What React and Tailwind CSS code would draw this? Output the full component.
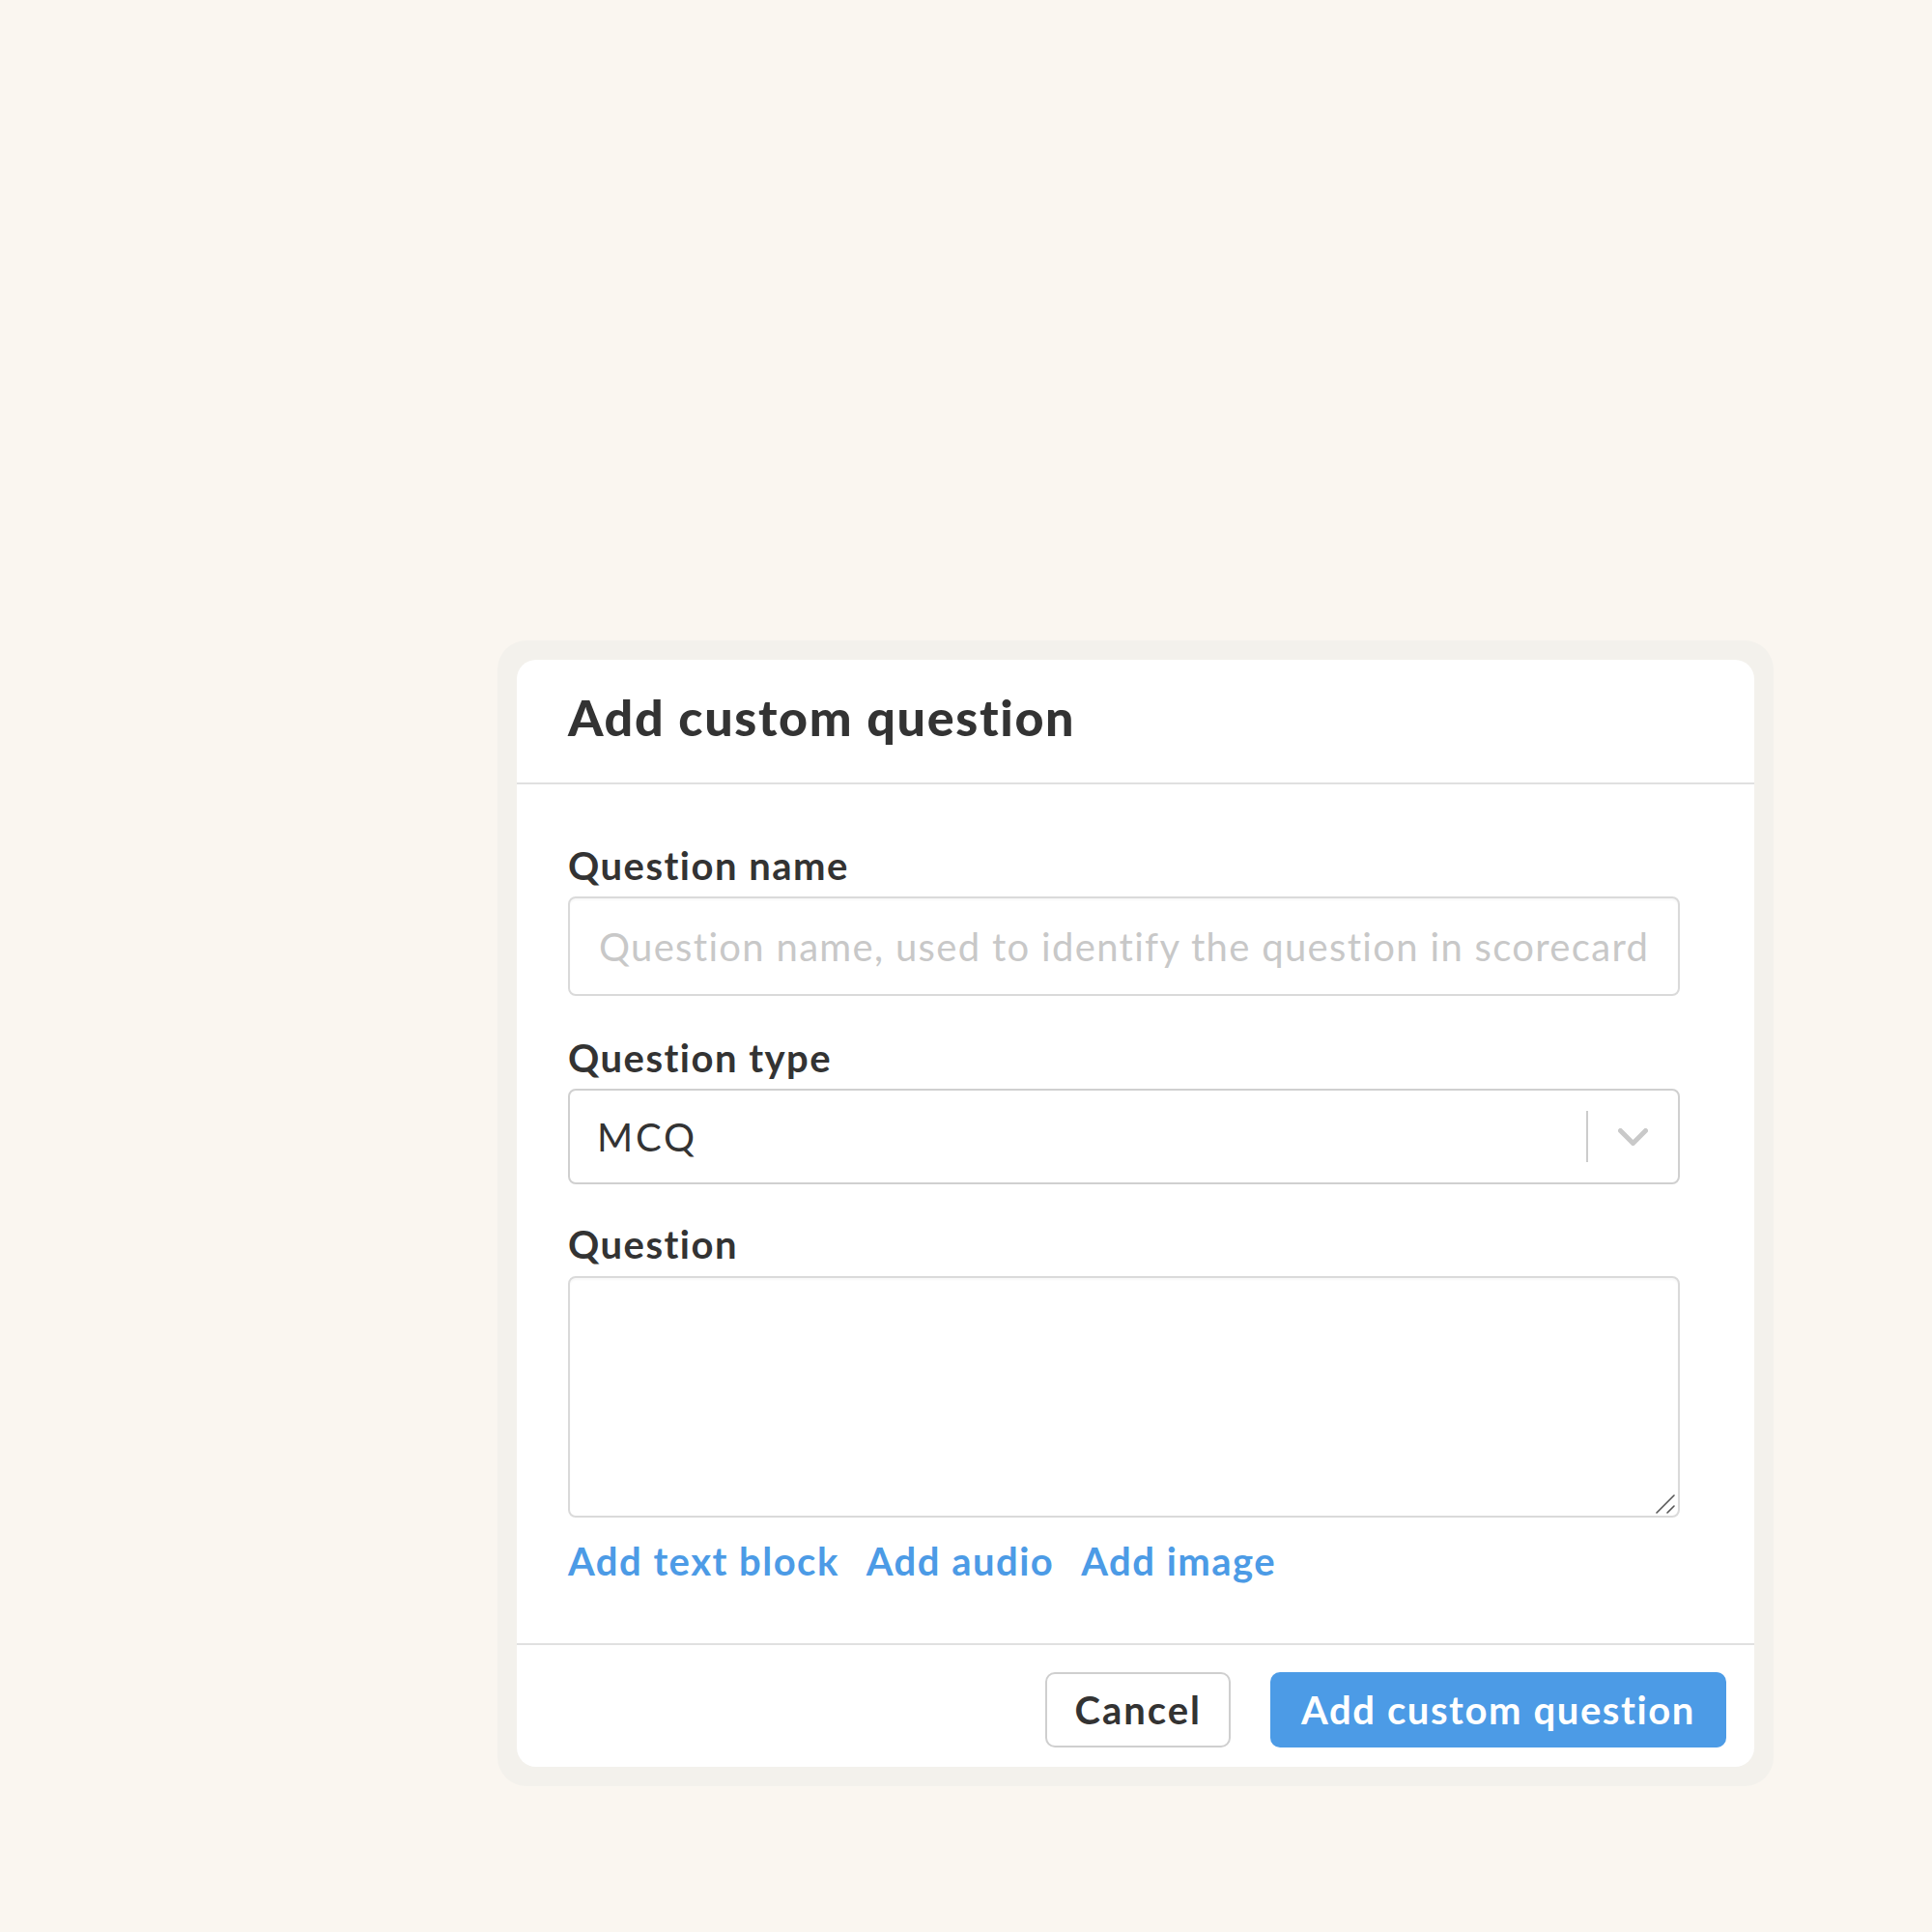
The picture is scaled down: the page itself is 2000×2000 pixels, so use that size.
import React from 'react'

// Light-grey chevron used by the question type picker
function Chevron() {
  return (
    <svg width="31" height="18" viewBox="0 0 31 18" fill="none">
      <polyline points="2.5,2.5 15.5,15.5 28.5,2.5" stroke="#c9c9c9" strokeWidth="5" strokeLinecap="round" strokeLinejoin="round" />
    </svg>
  )
}

function ResizeGrip() {
  return (
    <svg className="pointer-events-none absolute bottom-[4px] right-[5px]" width="20" height="20" viewBox="0 0 20 20" fill="none">
      <line x1="1" y1="19" x2="19" y2="1" stroke="#555555" strokeWidth="1.6" strokeLinecap="round" />
      <line x1="12" y1="19" x2="19" y2="12" stroke="#555555" strokeWidth="1.6" strokeLinecap="round" />
    </svg>
  )
}

function Label({ children, className = '' }) {
  return (
    <label className={`block text-[40px] leading-[40px] font-bold tracking-[0.037em] text-[#333333] ${className}`}>
      {children}
    </label>
  )
}

export default function App() {
  return (
    <div className="min-h-screen bg-[#faf6f0] pt-[663px] pl-[515px] font-['Lato',sans-serif]">
      <div className="w-[1321px] rounded-[30px] bg-[#f3f1ec] p-5">
        <div className="rounded-[20px] bg-white">

          {/* Header */}
          <header className="border-b-2 border-[#e0e0e0] px-[53px] pt-[33px] pb-[42px]">
            <h1 className="text-[52px] leading-[52px] font-black tracking-[0.032em] text-[#333333]">Add custom question</h1>
          </header>

          {/* Form body */}
          <div className="pl-[53px] pr-[77px] pt-[64px] pb-[65px]">
            <Label>Question name</Label>
            <input
              type="text"
              placeholder="Question name, used to identify the question in scorecard"
              className="mt-3 block h-[103px] w-full rounded-[8px] border-2 border-[#dadada] px-[30px] text-[40px] tracking-[0.033em] text-[#333333] placeholder:text-[#c8c8c8] shadow-[inset_0_2px_2px_rgba(0,0,0,0.03)] outline-none"
            />

            <Label className="mt-[44px]">Question type</Label>
            <div className="mt-3 flex h-[99px] items-center rounded-[8px] border-2 border-[#d0d0d0] pl-[28px] pr-[31px]">
              <span className="flex-1 text-[40px] tracking-[0.07em] text-[#333333]">MCQ</span>
              <span className="h-[53px] w-[2px] bg-[#cccccc]" />
              <span className="ml-[31px] flex items-center">
                <Chevron />
              </span>
            </div>

            <Label className="mt-[42px]">Question</Label>
            <div className="relative mt-[13px]">
              <textarea className="block h-[250px] w-full resize-none rounded-[8px] border-2 border-[#dadada] px-[30px] py-4 text-[40px] outline-none shadow-[inset_0_2px_2px_rgba(0,0,0,0.03)]" />
              <ResizeGrip />
            </div>

            <div className="mt-[25px] flex gap-[28px] text-[40px] leading-[40px] font-bold tracking-[0.037em] text-[#4c9be6]">
              <span>Add text block</span>
              <span>Add audio</span>
              <span>Add image</span>
            </div>
          </div>

          {/* Footer actions */}
          <footer className="flex justify-end gap-[41px] border-t-2 border-[#e0e0e0] pt-[28px] pb-[20px] pr-[29px]">
            <button className="h-[78px] rounded-[10px] border-2 border-[#cfcfcf] bg-white px-[28px] text-[40px] font-bold tracking-[0.05em] text-[#333333]">
              Cancel
            </button>
            <button className="h-[78px] rounded-[10px] bg-[#4c9be6] px-[32px] text-[40px] font-bold tracking-[0.04em] text-white">
              Add custom question
            </button>
          </footer>
        </div>
      </div>
    </div>
  )
}
